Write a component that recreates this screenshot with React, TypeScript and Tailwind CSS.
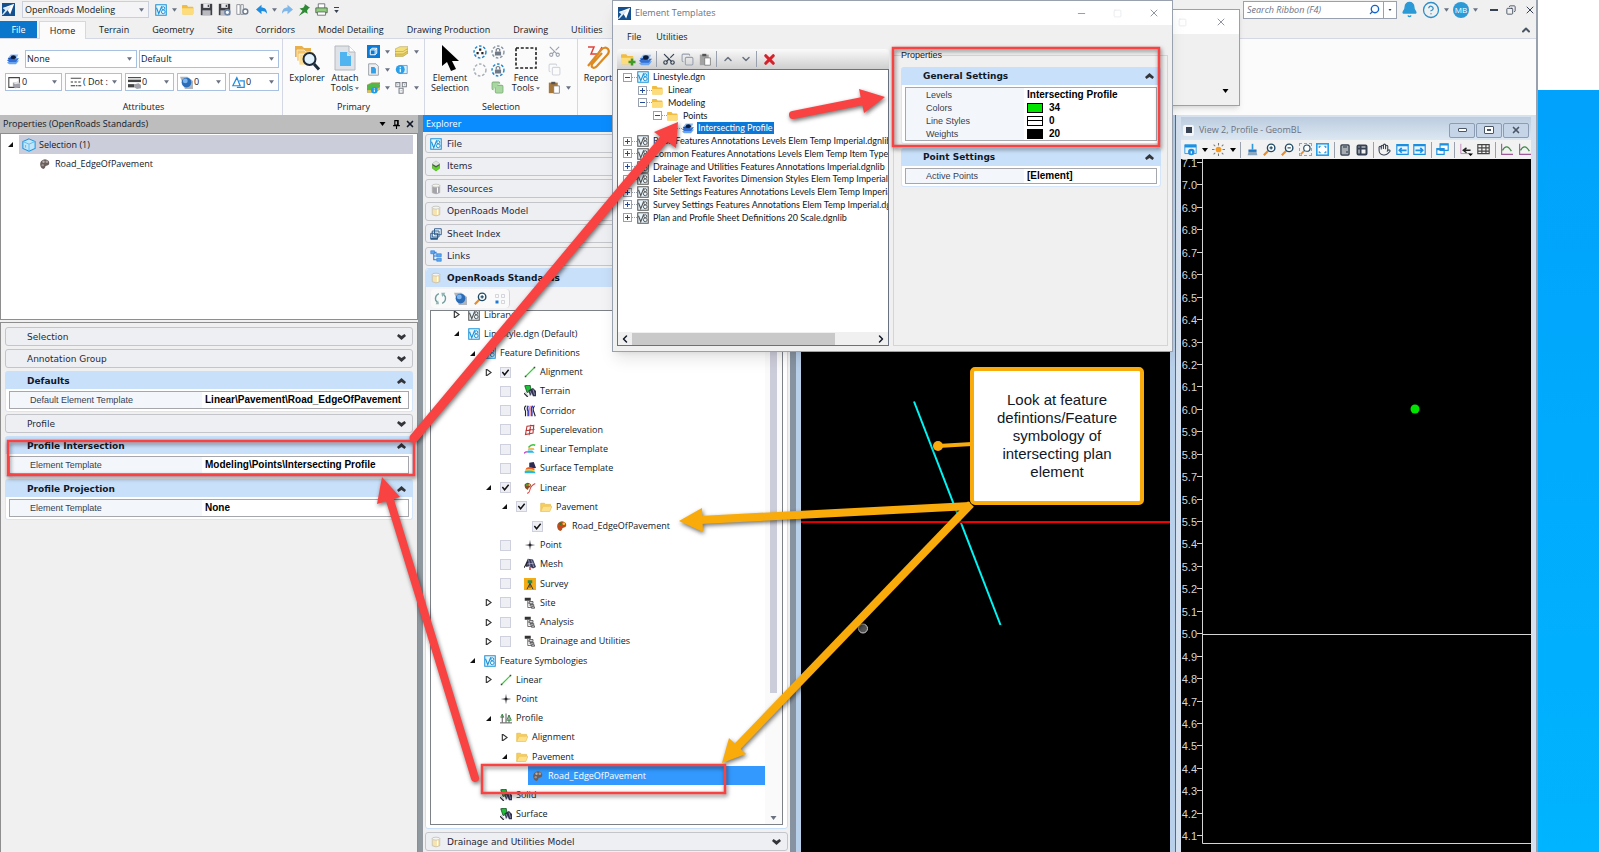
import type { ReactNode } from 'react'
import {
  Bell,
  Calculator,
  ChevronDown,
  ChevronLeft,
  ChevronRight,
  ChevronUp,
  CircleHelp,
  Copy,
  Hand,
  Minus,
  Scissors,
  Search,
  Square,
  Table2,
  X,
} from 'lucide-react'
import { clsx } from 'clsx'

type IconProps = { className?: string }

function Svg({ className = 'h-3 w-3', children }: IconProps & { children: ReactNode }) {
  return (
    <svg viewBox="0 0 16 16" className={clsx('shrink-0', className)} fill="none" aria-hidden="true">
      {children}
    </svg>
  )
}

/* ---------- icons ---------- */

function Caret({ className = 'h-1 w-[5px] text-gray-500' }: IconProps) {
  return (
    <svg viewBox="0 0 6 4" className={clsx('pointer-events-none shrink-0', className)} aria-hidden="true">
      <path d="M0 0h6L3 4z" fill="currentColor" />
    </svg>
  )
}

function LogoIcon({ className }: IconProps) {
  return (
    <Svg className={className}>
      <path d="M0 0h16v16H0z" fill="#14508f" />
      <path d="M1 6 15 1 10 14 7 9z" fill="#fff" />
      <path d="m1 6 10-2-4 5-6 6-1-1 4-5z" fill="#dcebfa" />
      <path d="m7 9 4-5-7 9z" fill="#14508f" />
    </Svg>
  )
}

function V8Icon({ className, color = '#1b93d8' }: IconProps & { color?: string }) {
  return (
    <Svg className={className}>
      <path d="M1 1h14v14H1z" fill="#e9f5fd" stroke={color} strokeWidth="1.4" />
      <path d="m2 5 3 8 4-10" stroke={color} strokeWidth="1.5" />
      <circle cx="11" cy="5.6" r="2" stroke={color} strokeWidth="1.3" />
      <circle cx="11" cy="10.4" r="2.5" stroke={color} strokeWidth="1.3" />
    </Svg>
  )
}

function FolderIcon({ className }: IconProps) {
  return (
    <Svg className={className}>
      <path d="M0 3.500q0-1 1-1h5l1.500 2H13q1 0 1 1V13q0 1-1 1H1q-1 0-1-1z" fill="#f0bd42" />
      <path d="M0 6.500h14V13q0 1-1 1H1q-1 0-1-1z" fill="#fddc7c" />
    </Svg>
  )
}

function OpenFolderIcon({ className }: IconProps) {
  return (
    <Svg className={className}>
      <path d="M1 14V3h5l1.500 1.500H14V7" fill="#f6cf5e" stroke="#e6bb4c" />
      <path d="m1 14 3-7h12l-3 7z" fill="#ffe08a" stroke="#ecc45a" />
    </Svg>
  )
}

function SaveIcon({ className, gear }: IconProps & { gear?: boolean }) {
  return (
    <Svg className={className}>
      <path d="M1 1h14v14H1z" fill="#3f3f46" />
      <path d="M4 1h8v5H4z" fill="#e8e8ec" />
      <path d="M9.500 2h1.500v3H9.500z" fill="#3f3f46" />
      <path d="M3 9h10v6H3z" fill="#b9b9c0" />
      {gear && <circle cx="11.500" cy="11.500" r="3" fill="#fff" stroke="#6c87a8" strokeWidth="2" />}
    </Svg>
  )
}

function BookGearIcon({ className }: IconProps) {
  return (
    <Svg className={className}>
      <path d="M1 2h4v12H1zM6 2h3v12H6z" fill="#fff" stroke="#7f858c" />
      <circle cx="11.500" cy="10.500" r="3" fill="#fff" stroke="#6c7d92" strokeWidth="1.800" />
    </Svg>
  )
}

function UndoIcon({ className, color = '#1e8de0' }: IconProps & { color?: string }) {
  return (
    <Svg className={className}>
      <path d="M0 8 8 1v4c5 0 8 3 8 9-2-3-4-4-8-4v5z" fill={color} />
    </Svg>
  )
}

function PushpinIcon({ className }: IconProps) {
  return (
    <Svg className={className}>
      <path d="m9 0 7 5-2 1-2 3 1 4-4-2-8 5 5-7-4-3 5-1 2-3z" fill="#2f8a36" />
    </Svg>
  )
}

function PrintIcon({ className }: IconProps) {
  return (
    <Svg className={className}>
      <path d="M4 1h8v6H4z" fill="#fff" stroke="#5c6066" />
      <path d="M1 6h14v6H1z" fill="#8fce7c" stroke="#4f5a50" />
      <path d="M3 11h10v4H3z" fill="#fff" stroke="#5c6066" />
    </Svg>
  )
}

function LevelIcon({ className }: IconProps) {
  return (
    <Svg className={className}>
      <path d="m0 13 4-3h12l-4 5H3z" fill="#6aa3ee" />
      <path d="m0 9.500 4-2.500h12l-4 5H3z" fill="#2f6fd6" />
      <path d="m1 7 4-5h10l-3 7H3z" fill="#8dbdf7" />
      <path d="m1 7 4-1 6 2 1 1H3z" fill="#1a4fb0" />
      <ellipse cx="8.500" cy="5.500" rx="3.500" ry="2.600" fill="#0b1b3a" />
    </Svg>
  )
}

function ColorIcon({ className }: IconProps) {
  return (
    <Svg className={className}>
      <path d="M1 2h13v12H1z" stroke="#444" strokeWidth="1.300" />
      <path d="m6 8 6-1 3 2v5l-6 1-3-2z" fill="#a1a1aa" />
      <path d="m6 8 6-1 3 2-6 1z" fill="#e4e4e7" />
    </Svg>
  )
}

function LineStyleIcon({ className }: IconProps) {
  return (
    <Svg className={className}>
      <path d="M1 3h14" stroke="#333" strokeWidth="1.200" />
      <path d="M1 8h14" stroke="#333" strokeWidth="1.400" strokeDasharray="3 2" />
      <path d="M1 13h14" stroke="#333" strokeWidth="1.400" strokeDasharray="6 1 2 1" />
    </Svg>
  )
}

function WeightIcon({ className }: IconProps) {
  return (
    <Svg className={className}>
      <path d="M0 2h16" stroke="#444" strokeWidth="1.400" />
      <path d="M0 6h16" stroke="#444" strokeWidth="3" />
      <path d="M0 12h8" stroke="#444" strokeWidth="4" />
      <path d="m8 10 5-1 3 2v4l-5 1-3-2z" fill="#a1a1aa" />
    </Svg>
  )
}

function SphereIcon({ className }: IconProps) {
  return (
    <Svg className={className}>
      <path d="M0 1h9l7 5v10H6z" fill="#b0b4bb" />
      <circle cx="8" cy="8" r="6" fill="#2a6cb8" />
      <circle cx="6.500" cy="6" r="3" fill="#7db4ee" />
    </Svg>
  )
}

function PriorityIcon({ className }: IconProps) {
  return (
    <Svg className={className}>
      <path d="M6 2 1 12h9zM9 6h6v8H6" stroke="#1e8de0" strokeWidth="1.500" />
    </Svg>
  )
}

function ExplorerIcon() {
  return (
    <svg viewBox="0 0 26 26" className="h-[26px] w-[26px] shrink-0" fill="none" aria-hidden="true">
      <path d="M1 1h7l2 2h7v9H1z" fill="#e9b04a" />
      <path d="M3 5h7l2 2h8v9H3z" fill="#f3c568" stroke="#fff" strokeWidth=".6" />
      <path d="M5 9h7l2 2h8v9H5z" fill="#fbdc94" stroke="#fff" strokeWidth=".6" />
      <circle cx="15.500" cy="14" r="6" fill="#e3f3fd" stroke="#1d2b3a" strokeWidth="2" />
      <path d="m20 19 5 5.500" stroke="#1d2b3a" strokeWidth="3" />
    </svg>
  )
}

function AttachIcon() {
  return (
    <svg viewBox="0 0 22 26" className="h-[26px] w-[22px] shrink-0" fill="none" aria-hidden="true">
      <path d="M1 1h14l6 6v18H1z" fill="#dfe2e6" stroke="#b4b9c0" />
      <path d="M15 1v6h6" fill="#fff" stroke="#b4b9c0" />
      <path d="M6 7h7l4 4v10H6z" fill="#4fb4f0" />
      <path d="M13 7v4h4z" fill="#c4e6fb" />
    </svg>
  )
}

function CubeIcon({ className }: IconProps) {
  return (
    <Svg className={className}>
      <path d="M0 0h16v16H0z" fill="#0a7ad6" />
      <path d="M4 6h6v6H4zM4 6l2-2h6l-2 2M12 4v6l-2 2" stroke="#fff" strokeWidth="1.200" />
    </Svg>
  )
}

function PageIcon({ className }: IconProps) {
  return (
    <Svg className={className}>
      <path d="M2 1h9l3 3v11H2z" fill="#eef0f2" stroke="#8d949c" />
      <path d="M5 5h4l2 2v6H5z" fill="#31a0e8" />
    </Svg>
  )
}

function StackIcon({ className, top = '#f3df7c', badge }: IconProps & { top?: string; badge?: boolean }) {
  return (
    <Svg className={className}>
      <path d="m0 11 6-3h10v2l-6 4H0z" fill="#e2c95c" stroke="#a8923a" strokeWidth=".6" />
      <path d="m0 8 6-3h10v2l-6 4H0z" fill={top} stroke="#a8923a" strokeWidth=".6" />
      <path d="m0 5 6-3h10v2l-6 4H0z" fill={top} stroke="#a8923a" strokeWidth=".6" />
      {badge && <circle cx="9" cy="11.500" r="4" fill="#1e9be6" />}
      {badge && <path d="M9 10.500v3M9 9v.8" stroke="#fff" strokeWidth="1.200" />}
    </Svg>
  )
}

function InfoTagIcon({ className }: IconProps) {
  return (
    <Svg className={className}>
      <path d="M6 3h9v10H6z" fill="#dff0fc" stroke="#3aa0e6" />
      <circle cx="6.500" cy="8" r="5.500" fill="#2b9fe8" />
      <path d="M6.500 7v4.500M6.500 4.500V6" stroke="#fff" strokeWidth="1.500" />
    </Svg>
  )
}

function BlocksIcon({ className }: IconProps) {
  return (
    <Svg className={className}>
      <path d="M1 2h5v5H1zM9 2h5v5H9zM5 9h5v6H5zM3 4.500h1M11 4.500h1M7 12h1" stroke="#7c828a" strokeWidth="1.300" />
    </Svg>
  )
}

function CursorIcon() {
  return (
    <svg viewBox="0 0 18 26" className="h-[26px] w-[18px] shrink-0" aria-hidden="true">
      <path d="M1 0v21l5-4 4 9 5-2-4-8h7z" fill="#000" />
    </svg>
  )
}

function RingIcon({ color = '#2288d0', dots, lock }: { color?: string; dots?: boolean; lock?: boolean }) {
  return (
    <Svg className="h-[14px] w-[14px]">
      <circle cx="8" cy="8" r="6.800" stroke={color} strokeWidth="1.700" strokeDasharray="3 2" />
      {dots && <path d="M7 4h2.500v2.500H7zM4 8h2.500v2.500H4zM9.500 8H12v2.500H9.500z" fill="#222" />}
      {lock && <path d="M4.500 7.500h7V12h-7z" fill="#6f7a86" />}
      {lock && <path d="M6 7.500V5q2-2 4 0v2.500" stroke="#6f7a86" strokeWidth="1.300" />}
    </Svg>
  )
}

function FenceIcon() {
  return (
    <svg viewBox="0 0 22 22" className="h-[22px] w-[22px] shrink-0" fill="none" aria-hidden="true">
      <path d="M1 1h20v20H1z" stroke="#222" strokeWidth="1.600" strokeDasharray="3 1.800" />
    </svg>
  )
}

function PasteIcon({ className, board = '#a5773a' }: IconProps & { board?: string }) {
  return (
    <Svg className={className}>
      <path d="M1 2h11v13H1z" fill={board} />
      <path d="M4 1h5v3H4z" fill="#555" />
      <path d="M7 6h7v9H7z" fill="#fff" stroke="#777" />
    </Svg>
  )
}

function ReportIcon() {
  return (
    <svg viewBox="0 0 26 26" className="h-[26px] w-[26px] shrink-0" fill="none" aria-hidden="true">
      <path d="M3 2h6l-3 7h7l4-7" stroke="#e0433a" strokeWidth="1.500" />
      <path d="M3 21 16 5q4-4 7-1 2 3-1 6L12 21q-3 3-5 1-1-2 1-4l9-10" stroke="#dd8a20" strokeWidth="2.200" />
    </svg>
  )
}

function GemIcon({ className }: IconProps) {
  return (
    <Svg className={className}>
      <path d="m8 1 5 4v6l-5 4-5-4V5z" fill="#4d5a4d" />
      <path d="m8 1 5 4-5 3-5-3z" fill="#dfe5df" />
      <path d="m3 7 5 3 5-3v4l-5 4-5-4z" fill="#5fd225" />
    </Svg>
  )
}

function DrumIcon({ className, fill = '#a3a3ab' }: IconProps & { fill?: string }) {
  return (
    <Svg className={className}>
      <path d="M3 3v10q5 3 10 0V3z" fill={fill} stroke="#b4b2a6" strokeWidth=".8" />
      <ellipse cx="8" cy="3.500" rx="5" ry="2" fill="#f4f4f5" stroke="#b4b2a6" strokeWidth=".8" />
      <path d="M10 6v7" stroke="#fff" strokeWidth="1.500" />
    </Svg>
  )
}

function SheetsIcon({ className }: IconProps) {
  return (
    <Svg className={className}>
      <path d="M1 7h9v8H1zM3 4h9v8H3zM6 1h9v8H6z" fill="#f1f7fd" stroke="#2f5d8a" strokeWidth="1.300" />
      <path d="M1 13h9v2H1z" fill="#2f5d8a" />
    </Svg>
  )
}

function LinksIcon({ className }: IconProps) {
  return (
    <Svg className={className}>
      <path d="M3 3h5v3M5 4v9h4M5 8h4" stroke="#2a78d8" strokeWidth="1.400" />
      <path d="M1 1h5v4H1zM9 5h6v4H9zM9 11h6v4H9z" fill="#5ba8ef" stroke="#2a78d8" strokeWidth=".8" />
    </Svg>
  )
}

function SelectionCubeIcon({ className }: IconProps) {
  return (
    <Svg className={className}>
      <path d="m8 1 7 3v8l-7 3-7-3V4z" fill="#bfe6fb" stroke="#1f95de" strokeWidth="1.200" />
      <path d="m1 4 7 3 7-3M8 7v8" stroke="#5cb7ec" />
      <path d="M4 8v3" stroke="#e8a23a" strokeWidth="1.300" />
    </Svg>
  )
}

function PaletteIcon({ className, gray }: IconProps & { gray?: boolean }) {
  return (
    <Svg className={className}>
      <path d="M3 4q5-5 10 0 2 5-2 6-3 0-3 3-2 3-5 0-3-5 0-9z" fill={gray ? '#6b5f5c' : '#b5501c'} />
      <circle cx="6" cy="5" r="1.600" fill={gray ? '#b8b0ad' : '#2f7a2a'} />
      <circle cx="10.500" cy="5" r="1.800" fill={gray ? '#a8a09d' : '#f7c531'} />
      <circle cx="5" cy="9.500" r="1.600" fill={gray ? '#9c9491' : '#e8322a'} />
    </Svg>
  )
}

function AlignmentIcon({ className }: IconProps) {
  return (
    <Svg className={className}>
      <path d="M2 14 14 2" stroke="#38c838" strokeWidth="1.500" />
      <path d="M1 13h2v2H1zM13 1h2v2h-2z" fill="#444" />
    </Svg>
  )
}

function TerrainIcon({ className }: IconProps) {
  return (
    <Svg className={className}>
      <path d="m1 1 7-1 2 8-6 2z" fill="#1fbf3a" stroke="#14401c" />
      <path d="m6 7 6-3 4 4v7h-4l-2-4-2 4z" fill="#33334d" />
      <path d="m1 9 5 6M8 8l3 6M12 6l2 7" stroke="#a9b0d8" />
      <path d="m0 11 5 5" stroke="#222" strokeWidth="1.500" />
    </Svg>
  )
}

function CorridorIcon({ className }: IconProps) {
  return (
    <Svg className={className}>
      <path d="M3 1Q-1 3 2 8v7M14 1q-3 4-1 8l2 6" stroke="#222" strokeWidth="1.500" />
      <path d="M5.500 1q-2 4 0 7v7M11.500 1q-3 4-1 8v6" stroke="#2a32c8" strokeWidth="2" />
      <path d="M8.500 1q-2 4-.500 7v7" stroke="#f08a8a" strokeWidth="2" />
    </Svg>
  )
}

function SuperIcon({ className }: IconProps) {
  return (
    <Svg className={className}>
      <path d="m4 3 9-1-1 10-10 2zM9 1 7 15M2 9l12-2" stroke="#b83a3a" strokeWidth="1.500" />
    </Svg>
  )
}

function LinearTemplateIcon({ className }: IconProps) {
  return (
    <Svg className={className}>
      <path d="M6 6q4-5 9-3" stroke="#39c23a" strokeWidth="2" />
      <path d="M6 7h7l1 2H5z" fill="#f2a12a" />
      <path d="M5 10h6l3 3H5z" fill="#28b6e8" />
      <path d="M0 14q2-3 5-2" stroke="#c23ac8" strokeWidth="1.800" />
    </Svg>
  )
}

function SurfaceTemplateIcon({ className }: IconProps) {
  return (
    <Svg className={className}>
      <path d="m7 1 6-1 3 8-9 1z" fill="#2b2b52" />
      <path d="M3 8q5-3 11 1v2H2z" fill="#f0622a" />
      <path d="M2 10q6-2 12 1v2H1z" fill="#f4d22a" />
      <path d="M1 12q6-2 14 1v2H1z" fill="#28b6e8" />
    </Svg>
  )
}

function LinearIcon({ className }: IconProps) {
  return (
    <Svg className={className}>
      <path d="M1 3q4-4 8 0 1 4-3 5 0 3-2 2-4-2-3-7z" fill="#8a4a22" />
      <circle cx="4" cy="4" r="1.500" fill="#38b038" />
      <circle cx="7" cy="4" r="1.200" fill="#f4c22a" />
      <path d="M4 15q3 0 4-5t7-8" stroke="#e04848" strokeWidth="1.400" />
    </Svg>
  )
}

function PointIcon({ className }: IconProps) {
  return (
    <Svg className={className}>
      <path d="m8 1 1.500 5.500L15 8 9.500 9.500 8 15 6.500 9.500 1 8l5.500-1.500z" fill="#8a8a90" />
      <circle cx="8" cy="8" r="1.800" fill="#2a2a2e" />
    </Svg>
  )
}

function MeshIcon({ className }: IconProps) {
  return (
    <Svg className={className}>
      <path d="m5 1 7 1 4 10-4 2-5-3-4 1-1-4z" fill="#3a3a5a" />
      <path d="m6 2 2 9M10 3l3 9M4 8l9-1" stroke="#b9bedd" strokeWidth=".9" />
      <path d="m0 13 5-8" stroke="#222" strokeWidth="1.500" />
      <path d="M8 12v4" stroke="#e03030" strokeWidth="2" />
    </Svg>
  )
}

function SurveyIcon({ className }: IconProps) {
  return (
    <Svg className={className}>
      <path d="M0 0h16v16H0z" fill="#f5ac14" />
      <path d="M8 7 4 15M8 7l4 8M8 7v6" stroke="#333" strokeWidth="1.300" />
      <path d="M5 3h6v4H5z" fill="#2e8a4a" />
    </Svg>
  )
}

function SiteIcon({ className }: IconProps) {
  return (
    <Svg className={className}>
      <path d="M1 1h8v4H1z" fill="#333" />
      <path d="M5 5v9h5M5 8h4" stroke="#666" strokeWidth="1.200" />
      <path d="M7 6h5v3H7zM8 10h5v2H8zM10 13h4v2h-4z" fill="#d8d8dc" stroke="#444" />
    </Svg>
  )
}

function ProfileIcon({ className }: IconProps) {
  return (
    <Svg className={className}>
      <path d="M0 14.500h16M3 3v11M8 2v12M12 4v10" stroke="#444" strokeWidth="1.200" />
      <path d="m1 7 2-4 2 4zM9 11l3-7 3 7z" stroke="#2c8a3a" strokeWidth="1.200" />
    </Svg>
  )
}

function RefreshIcon({ className }: IconProps) {
  return (
    <Svg className={className}>
      <path d="M6 2Q1 4 2 10l3 4M10 14q5-2 4-8l-3-4" stroke="#6f9c9c" strokeWidth="1.700" />
      <path d="m5 10 1 5H2zM10 6 9 1h5z" fill="#8fb5b5" />
    </Svg>
  )
}

function ZoomIcon({ className, sign }: IconProps & { sign?: string }) {
  return (
    <Svg className={className}>
      <path d="M7 9 1 15" stroke="#e8892a" strokeWidth="2.600" />
      <circle cx="10" cy="6" r="4.600" fill="#fff" stroke="#1f4a66" strokeWidth="1.700" />
      {sign && <path d={sign} stroke="#1f4a66" strokeWidth="1.500" />}
    </Svg>
  )
}

/* ---------- ribbon ---------- */

const tabs = ['Terrain', 'Geometry', 'Site', 'Corridors', 'Model Detailing', 'Drawing Production', 'Drawing', 'Utilities']

function Combo({ label, value, icon, className }: { label: string; value: string; icon?: ReactNode; className?: string }) {
  return (
    <label className={clsx('flex h-[18px] items-center border border-[#a9c1e0] bg-white pr-1', className)}>
      {icon}
      <select aria-label={label} className="h-full min-w-0 flex-1 appearance-none bg-transparent pl-px outline-none">
        <option>{value}</option>
      </select>
      <Caret />
    </label>
  )
}

function TitleBar() {
  return (
    <header className="flex h-[21px] items-center bg-[#f0f0f0] pb-[2px] pl-[2px]">
      <LogoIcon className="h-[13px] w-[13px]" />
      <label className="ml-[7px] flex h-[17px] w-[127px] items-center border border-[#c9cfdc] bg-[#f4f4f6] pr-1">
        <select aria-label="Workflow" className="min-w-0 flex-1 appearance-none bg-transparent pl-[2px] outline-none">
          <option>OpenRoads Modeling</option>
        </select>
        <Caret />
      </label>
      <div className="ml-[6px] flex items-center gap-[5px]">
        <V8Icon className="h-3 w-3" />
        <Caret />
        <FolderIcon className="h-[13px] w-[13px]" />
        <SaveIcon className="h-[13px] w-[13px]" />
        <SaveIcon className="h-[13px] w-[13px]" gear />
        <BookGearIcon className="h-[13px] w-[13px]" />
        <UndoIcon className="ml-[2px] h-[11px] w-[11px]" />
        <Caret />
        <span className="-scale-x-100">
          <UndoIcon className="h-[11px] w-[11px]" color="#7fb8e8" />
        </span>
        <PushpinIcon className="h-3 w-3" />
        <PrintIcon className="h-[13px] w-[13px]" />
        <span className="ml-px flex flex-col gap-[2px]">
          <i className="h-px w-[5px] bg-gray-700" />
          <Caret className="h-[3px] w-[5px] text-gray-700" />
        </span>
      </div>
      <div className="ml-auto flex items-center">
        <label className="flex h-[18px] w-[154px] items-center border border-gray-400 bg-white">
          <input
            aria-label="Search Ribbon"
            placeholder="Search Ribbon (F4)"
            className="min-w-0 flex-1 bg-transparent pl-[3px] italic outline-none placeholder:text-gray-500"
          />
          <Search className="h-[11px] w-[11px] -scale-x-100 text-[#1464c8]" strokeWidth={3} />
          <span className="ml-[3px] flex h-full w-[13px] items-center justify-center border-l border-gray-400">
            <Caret className="h-[2px] w-1 text-gray-700" />
          </span>
        </label>
        <Bell className="ml-1 h-[17px] w-[17px] fill-[#2b9ad6] text-[#2b9ad6]" />
        <CircleHelp className="ml-1 h-[18px] w-[18px] text-[#2b8ec8]" strokeWidth={1.700} />
        <Caret className="ml-1 h-1 w-[5px] text-gray-500" />
        <span className="ml-1 flex h-4 w-4 items-center justify-center rounded-full bg-[#2b9ad6] text-[8px] text-white">MB</span>
        <Caret className="ml-1 h-1 w-[5px] text-gray-500" />
        <button aria-label="Minimize" className="ml-3 flex h-3 w-3 items-center">
          <i className="h-[2px] w-2 bg-gray-700" />
        </button>
        <button aria-label="Restore" className="ml-1">
          <Copy className="h-[10px] w-[10px] -scale-x-100 text-gray-700" />
        </button>
        <button aria-label="Close" className="ml-2">
          <X className="h-3 w-3 text-gray-700" />
        </button>
      </div>
    </header>
  )
}

function TabRow() {
  return (
    <nav className="flex h-[18px] items-stretch border-b border-[#d3d8e4] bg-[#f0f0f0] pr-1">
      <button className="w-[37px] bg-[#0a76cc] text-white">File</button>
      <button className="ml-[2px] -mb-px w-[47px] border border-b-0 border-[#d3d8e4] bg-[#fbfbfb]">Home</button>
      <div className="ml-[13px] flex gap-[23px]">
        {tabs.map((tab) => (
          <button key={tab} className="whitespace-nowrap">
            {tab}
          </button>
        ))}
      </div>
      <button aria-label="Collapse ribbon" className="ml-auto">
        <ChevronUp className="h-3 w-3 text-gray-600" strokeWidth={4} />
      </button>
    </nav>
  )
}

function Group({ title, className, children }: { title: string; className: string; children: ReactNode }) {
  return (
    <section className={clsx('flex shrink-0 flex-col border-r border-[#d3d8e4]', className)}>
      <div className="flex flex-1 items-start">{children}</div>
      <h2 className="h-[14px] text-center leading-[12px]">{title}</h2>
    </section>
  )
}

function BigButton({ icon, lines, caret, className }: { icon: ReactNode; lines: string[]; caret?: boolean; className: string }) {
  return (
    <button className={clsx('mt-[6px] flex shrink-0 flex-col items-center leading-[10px]', className)}>
      <span className="flex h-[26px] items-center">{icon}</span>
      {lines.map((line, i) => (
        <span key={line} className={clsx('flex items-center gap-[2px]', i === 0 && 'mt-[2px]')}>
          {line}
          {caret && i === lines.length - 1 && <Caret className="h-[3px] w-1 text-gray-500" />}
        </span>
      ))}
    </button>
  )
}

function Ribbon() {
  return (
    <div className="flex h-[76px] overflow-hidden bg-[#fbfbfb]">
      <Group title="Attributes" className="w-[283px] pl-[5px]">
        <div className="flex flex-col gap-[5px] pt-[11px]">
          <div className="flex items-center">
            <LevelIcon className="mx-[2px] h-3 w-3" />
            <Combo label="Element template" value="None" className="ml-1 w-[112px]" />
            <Combo label="Level" value="Default" className="ml-[2px] w-[140px]" />
          </div>
          <div className="flex gap-[3px]">
            <Combo label="Color" value="0" icon={<ColorIcon className="ml-[2px] h-[13px] w-[13px]" />} className="w-[57px]" />
            <Combo label="Line style" value="( Dot :" icon={<LineStyleIcon className="ml-1 h-3 w-3" />} className="w-[57px]" />
            <Combo label="Weight" value="0" icon={<WeightIcon className="ml-[2px] h-[13px] w-[13px]" />} className="w-[49px]" />
            <Combo label="Transparency" value="0" icon={<SphereIcon className="ml-[2px] h-[13px] w-[13px]" />} className="w-[49px]" />
            <Combo label="Priority" value="0" icon={<PriorityIcon className="ml-[2px] h-[13px] w-[13px]" />} className="w-[50px]" />
          </div>
        </div>
      </Group>

      <Group title="Primary" className="w-[142px]">
        <BigButton icon={<ExplorerIcon />} lines={['Explorer']} className="ml-1 w-10" />
        <BigButton icon={<AttachIcon />} lines={['Attach', 'Tools']} caret className="w-9" />
        <div className="ml-1 grid grid-cols-[18px_10px_19px_6px] items-center gap-y-[5px] pt-[6px]">
          <CubeIcon className="h-[13px] w-[13px]" />
          <Caret />
          <StackIcon className="h-[13px] w-[13px]" />
          <Caret />
          <PageIcon className="h-[13px] w-[13px]" />
          <Caret />
          <InfoTagIcon className="h-[13px] w-[13px]" />
          <span />
          <StackIcon className="h-[13px] w-[13px]" top="#4fb848" badge />
          <Caret />
          <BlocksIcon className="h-[13px] w-[13px]" />
          <Caret />
        </div>
      </Group>

      <Group title="Selection" className="w-[153px]">
        <BigButton icon={<CursorIcon />} lines={['Element', 'Selection']} className="ml-1 w-[42px]" />
        <div className="ml-[2px] grid grid-cols-2 gap-x-1 gap-y-1 pt-[6px]">
          <RingIcon dots />
          <RingIcon color="#8a98a8" lock />
          <RingIcon color="#a8b0ba" />
          <RingIcon lock />
          <span />
          <Copy className="h-[13px] w-[13px] fill-[#a8d8a0] text-[#8ab884]" />
        </div>
        <BigButton icon={<FenceIcon />} lines={['Fence', 'Tools']} caret className="ml-1 w-[34px]" />
        <div className="ml-[5px] flex flex-col gap-[5px] pt-[6px]">
          <Scissors className="h-[13px] w-[13px] -rotate-90 text-gray-400" />
          <Copy className="h-[13px] w-[13px] text-gray-300" />
          <span className="flex items-center gap-[5px]">
            <PasteIcon className="h-[13px] w-[13px]" />
            <Caret />
          </span>
        </div>
      </Group>

      <BigButton icon={<ReportIcon />} lines={['Report']} className="w-10" />
    </div>
  )
}

/* ---------- shared panels ---------- */

function Chevron({ up }: { up?: boolean }) {
  return (
    <svg viewBox="0 0 9 6" className="ml-auto h-[6px] w-[9px] shrink-0" aria-hidden="true">
      <path d={up ? 'M4.500 0 9 4 7.500 6l-3-2-3 2L0 4z' : 'M4.500 6 9 2 7.500 0l-3 2-3-2L0 2z'} fill="#33353a" />
    </svg>
  )
}

function ClosedBar({ title, icon, pad = 'pl-[21px]' }: { title: string; icon?: ReactNode; pad?: string }) {
  return (
    <button
      className={clsx(
        "flex h-[19px] w-full shrink-0 items-center rounded-[3px] border border-[#c3c5cb] bg-[#eeeff3] pr-[6px] font-[family-name:'DejaVu_Sans',sans-serif] text-gray-800",
        pad,
      )}
    >
      {icon}
      {title}
      <Chevron />
    </button>
  )
}

function OpenBar({ title, icon, pad = 'pl-[22px]' }: { title: string; icon?: ReactNode; pad?: string }) {
  return (
    <button
      className={clsx(
        "flex h-[18px] w-full shrink-0 items-center rounded-t-[3px] bg-[#c9e0fa] pr-[7px] font-[family-name:'DejaVu_Sans',sans-serif] font-bold",
        pad,
      )}
    >
      {icon}
      {title}
      <Chevron up />
    </button>
  )
}

type Field = { label: string; value: string; swatch?: ReactNode }

function FieldBox({ fields, cols, rowHeight }: { fields: Field[]; cols: string; rowHeight: string }) {
  return (
    <div className="rounded-b-[3px] border border-t-0 border-[#d5e6fa] bg-white px-[3px] py-[2px]">
      <div className="border border-[#a5a7ad]">
        {fields.map((f) => (
          <label
            key={f.label}
            className={clsx("grid items-center font-[family-name:'Liberation_Sans',sans-serif]", cols, rowHeight)}
          >
            <span className="flex h-full items-center bg-[#f3f7fc] pl-5 text-gray-700">{f.label}</span>
            <span className="flex min-w-0 items-center gap-[6px] pl-[3px]">
              {f.swatch}
              <input
                readOnly
                value={f.value}
                className="h-3 min-w-0 flex-1 bg-transparent text-[10px] font-bold text-black outline-none"
              />
            </span>
          </label>
        ))}
      </div>
    </div>
  )
}

function PropSection({ title, label, value }: { title: string; label: string; value: string }) {
  return (
    <section className="h-10 shrink-0">
      <OpenBar title={title} pad="pt-[2px] pl-[22px]" />
      <FieldBox fields={[{ label, value }]} cols="grid-cols-[192px_1fr]" rowHeight="h-4" />
    </section>
  )
}

function PropertiesPanel() {
  return (
    <aside className="flex w-[418px] shrink-0 flex-col bg-[#f0f0f0]">
      <div className="flex h-[18px] shrink-0 items-center bg-[#bdbdbd] pr-[3px] pl-[3px]">
        <h2>Properties (OpenRoads Standards)</h2>
        <Caret className="mr-[6px] ml-auto h-1 w-[7px] text-black" />
        <Svg className="h-[9px] w-[9px]">
          <path d="M5 1h6v8H5zM2 10h12M8 10v6M10 1v8" stroke="#000" strokeWidth="2" />
        </Svg>
        <X className="ml-1 h-[10px] w-[10px]" strokeWidth={4} />
      </div>
      <ul className="h-[187px] shrink-0 border border-[#8e8e8e] bg-white pt-px pr-1 pl-px">
        <li className="flex h-[19px] items-center">
          <TreeCaret open />
          <span className="ml-px flex h-full flex-1 items-center gap-[3px] bg-[#cccdda] pl-[3px]">
            <SelectionCubeIcon className="h-[14px] w-[14px]" />
            Selection (1)
          </span>
        </li>
        <li className="flex h-[19px] items-center gap-1 pl-[37px]">
          <PaletteIcon className="h-3 w-3" gray />
          Road_EdgeOfPavement
        </li>
      </ul>
      <div className="mt-[2px] flex min-h-0 flex-1 flex-col gap-[3px] border-x border-t border-[#8e8e8e] px-1 pt-1">
        <ClosedBar title="Selection" />
        <ClosedBar title="Annotation Group" />
        <PropSection title="Defaults" label="Default Element Template" value="Linear\Pavement\Road_EdgeOfPavement" />
        <ClosedBar title="Profile" />
        <PropSection title="Profile Intersection" label="Element Template" value="Modeling\Points\Intersecting Profile" />
        <PropSection title="Profile Projection" label="Element Template" value="None" />
      </div>
    </aside>
  )
}

/* ---------- explorer ---------- */

function TreeCaret({ open }: { open?: boolean }) {
  return (
    <span className="flex w-4 shrink-0 justify-center">
      {open !== undefined && (
        <svg viewBox="0 0 8 8" className={clsx('shrink-0', open ? 'h-[5px] w-[5px]' : 'h-[7px] w-[7px]')} aria-hidden="true">
          {open ? (
            <path d="M8 0v8H0z" fill="#111" />
          ) : (
            <path d="M1.500 0 7 4 1.500 8z" fill="#fff" stroke="#333" strokeWidth="1.300" />
          )}
        </svg>
      )}
    </span>
  )
}

type Node = {
  text: string
  level: number
  icon: ReactNode
  open?: boolean
  check?: boolean
  selected?: boolean
}

const indents = ['pl-4', 'pl-8', 'pl-12', 'pl-16', 'pl-20']

const nodes: Node[] = [
  { text: 'Library', level: 0, icon: <V8Icon color="#555" />, open: false },
  { text: 'Linestyle.dgn (Default)', level: 0, icon: <V8Icon />, open: true },
  { text: 'Feature Definitions', level: 1, icon: <V8Icon />, open: true },
  { text: 'Alignment', level: 2, icon: <AlignmentIcon />, open: false, check: true },
  { text: 'Terrain', level: 2, icon: <TerrainIcon />, check: false },
  { text: 'Corridor', level: 2, icon: <CorridorIcon />, check: false },
  { text: 'Superelevation', level: 2, icon: <SuperIcon />, check: false },
  { text: 'Linear Template', level: 2, icon: <LinearTemplateIcon />, check: false },
  { text: 'Surface Template', level: 2, icon: <SurfaceTemplateIcon />, check: false },
  { text: 'Linear', level: 2, icon: <LinearIcon />, open: true, check: true },
  { text: 'Pavement', level: 3, icon: <OpenFolderIcon />, open: true, check: true },
  { text: 'Road_EdgeOfPavement', level: 4, icon: <PaletteIcon />, check: true },
  { text: 'Point', level: 2, icon: <PointIcon />, check: false },
  { text: 'Mesh', level: 2, icon: <MeshIcon />, check: false },
  { text: 'Survey', level: 2, icon: <SurveyIcon />, check: false },
  { text: 'Site', level: 2, icon: <SiteIcon />, open: false, check: false },
  { text: 'Analysis', level: 2, icon: <SiteIcon />, open: false, check: false },
  { text: 'Drainage and Utilities', level: 2, icon: <SiteIcon />, open: false, check: false },
  { text: 'Feature Symbologies', level: 1, icon: <V8Icon />, open: true },
  { text: 'Linear', level: 2, icon: <AlignmentIcon />, open: false },
  { text: 'Point', level: 2, icon: <PointIcon /> },
  { text: 'Profile', level: 2, icon: <ProfileIcon />, open: true },
  { text: 'Alignment', level: 3, icon: <OpenFolderIcon />, open: false },
  { text: 'Pavement', level: 3, icon: <OpenFolderIcon />, open: true },
  { text: 'Road_EdgeOfPavement', level: 4, icon: <PaletteIcon gray />, selected: true },
  { text: 'Solid', level: 2, icon: <TerrainIcon /> },
  { text: 'Surface', level: 2, icon: <TerrainIcon /> },
]

function TreeRow({ node }: { node: Node }) {
  return (
    <li className={clsx('flex min-h-0 flex-1 items-center', indents[node.level])}>
      <TreeCaret open={node.open} />
      <label
        className={clsx('flex h-full flex-1 items-center gap-1 pl-1', node.selected && 'bg-[#3399ff] text-white')}
      >
        {node.check !== undefined && (
          <span className="mr-[9px] grid h-[11px] w-[11px] place-items-center">
            <input
              type="checkbox"
              defaultChecked={node.check}
              className="peer col-start-1 row-start-1 h-[11px] w-[11px] appearance-none border border-[#cfd0dd] bg-[#eeeef5]"
            />
            <svg
              viewBox="0 0 10 10"
              className="pointer-events-none invisible col-start-1 row-start-1 h-[9px] w-[9px] peer-checked:visible"
              fill="none"
              aria-hidden="true"
            >
              <path d="m1.500 4.500 2.500 3L8.500 2" stroke="#111" strokeWidth="1.600" />
            </svg>
          </span>
        )}
        {node.icon}
        {node.text}
      </label>
    </li>
  )
}

const bars: { title: string; icon: ReactNode }[] = [
  { title: 'File', icon: <V8Icon /> },
  { title: 'Items', icon: <GemIcon /> },
  { title: 'Resources', icon: <DrumIcon /> },
  { title: 'OpenRoads Model', icon: <DrumIcon fill="#f6e3ae" /> },
  { title: 'Sheet Index', icon: <SheetsIcon /> },
  { title: 'Links', icon: <LinksIcon /> },
]

function BarIcon({ children }: { children: ReactNode }) {
  return <span className="mr-[5px] flex w-3">{children}</span>
}

function ExplorerPanel() {
  return (
    <aside className="flex w-[367px] shrink-0 flex-col bg-[#f0f0f0]">
      <h2 className="flex h-[17px] shrink-0 items-center bg-[#0a8cff] pl-[3px] text-white">Explorer</h2>
      <div className="flex min-h-0 flex-1 flex-col px-[2px] pt-[2px]">
        <div className="flex h-[132px] shrink-0 flex-col justify-between">
          {bars.map((bar) => (
            <ClosedBar key={bar.title} title={bar.title} icon={<BarIcon>{bar.icon}</BarIcon>} pad="pl-1" />
          ))}
        </div>
        <div className="mt-[2px] flex min-h-0 flex-1 flex-col rounded-[3px] border border-[#c9e0fa] bg-white">
          <OpenBar
            title="OpenRoads Standards"
            icon={
              <BarIcon>
                <DrumIcon fill="#f6e3ae" />
              </BarIcon>
            }
            pad="pl-1"
          />
          <div className="flex h-[23px] shrink-0 items-center bg-[#f3f3f5] pl-[5px]">
            <div className="flex h-[19px] items-center gap-[7px] rounded-sm border-r border-gray-300 bg-[#fafafa] px-[3px]">
              <RefreshIcon className="h-[13px] w-[13px]" />
              <SphereIcon className="h-[13px] w-[13px]" />
              <ZoomIcon className="h-[13px] w-[13px]" sign="M8 6h4M10 4v4" />
              <Svg className="h-3 w-3">
                <path d="M2 2h4v4H2zM10 2h4v4h-4zM10 10h4v4h-4z" stroke="#c8cad2" />
                <path d="M2 10h4v4H2z" fill="#1e78d8" />
              </Svg>
            </div>
          </div>
          <div className="mr-1 mb-[3px] ml-1 flex min-h-0 flex-1 border border-[#7d8188]">
            <div className="flex min-w-0 flex-1 flex-col justify-end overflow-hidden">
              <ul className="flex h-[519px] shrink-0 flex-col pl-px">
                {nodes.map((node, i) => (
                  <TreeRow key={i} node={node} />
                ))}
              </ul>
            </div>
            <div className="flex w-[17px] flex-col items-center justify-between bg-[#fafafa] pb-1">
              <i className="h-[75%] w-[7px] bg-[#cccdda]" />
              <Caret className="h-1 w-[7px] text-gray-500" />
            </div>
          </div>
        </div>
        <div className="py-[3px] pb-px">
          <ClosedBar
            title="Drainage and Utilities Model"
            icon={
              <BarIcon>
                <DrumIcon fill="#f6e3ae" />
              </BarIcon>
            }
            pad="pl-1"
          />
        </div>
      </div>
    </aside>
  )
}

/* ---------- views ---------- */

function PlanView() {
  return (
    <section className="flex min-w-0 flex-1 flex-col border-x-[5px] border-[#b9d0ea] pt-[44px]">
      <svg className="min-h-0 w-full flex-1 bg-black" aria-label="Plan view">
        <path d="M113 242.500 199.500 466" stroke="#00f5f5" strokeWidth="2" />
        <path d="M0 363h1600" stroke="#f50000" strokeWidth="2" />
        <circle cx="62" cy="469.500" r="4.500" fill="#555" stroke="#ccc" />
      </svg>
    </section>
  )
}

const ticks = Array.from({ length: 31 }, (_, i) => ({ label: (7.1 - i * 0.1).toFixed(1), y: 4 + i * 22.44 }))

function Sep() {
  return <i className="h-4 w-px bg-gray-400" />
}

function ViewButton({ label, children }: { label: string; children: ReactNode }) {
  return (
    <button aria-label={label} className="flex h-[15px] w-[26px] items-center justify-center rounded-[2px] border border-[#8b9cb3] bg-[#c5d4e6]">
      {children}
    </button>
  )
}

function ChartIcon({ d, className }: IconProps & { d: string }) {
  return (
    <Svg className={className}>
      <path d="M2 1v13h14" stroke="#a05a9a" strokeWidth="1.400" />
      <path d={d} stroke="#3d8a44" strokeWidth="1.600" />
    </Svg>
  )
}

function PanIcon({ d }: { d: string }) {
  return (
    <Svg className="h-[13px] w-[13px]">
      <path d="M1 2h14v12H1z" fill="#eaf6ff" stroke="#1b8fe0" strokeWidth="1.400" />
      <path d="M1 3h14" stroke="#1b8fe0" strokeWidth="2" />
      <path d={d} stroke="#1b8fe0" strokeWidth="2" />
    </Svg>
  )
}

function ProfileView() {
  return (
    <section className="flex w-[361px] shrink-0 flex-col border-l border-[#2a7f98] bg-[#d5e1ef] px-[5px] pt-[2px]">
      <div className="flex h-[23px] shrink-0 items-center gap-[5px] bg-linear-to-b from-[#bccddf] to-[#dce7f2] pt-[3px] pr-[2px] pl-[2px]">
        <span className="flex h-[11px] w-[11px] items-center justify-center rounded-[2px] bg-gray-100">
          <i className="h-[6px] w-[6px] bg-gray-700" />
        </span>
        <h2 className="flex-1 text-gray-500">View 2, Profile - GeomBL</h2>
        <ViewButton label="Minimize view">
          <i className="h-1 w-[9px] rounded-[1px] border border-gray-600 bg-white" />
        </ViewButton>
        <div className="-mx-1">
          <ViewButton label="Maximize view">
            <i className="flex h-2 w-[10px] items-center justify-center rounded-[1px] border border-gray-600 bg-white">
              <i className="h-[2px] w-1 bg-gray-600" />
            </i>
          </ViewButton>
        </div>
        <ViewButton label="Close view">
          <X className="h-[10px] w-[10px] text-gray-600" strokeWidth={4} />
        </ViewButton>
      </div>
      <div className="flex h-[19px] shrink-0 items-center justify-between overflow-hidden bg-[#f2f2f2] pl-[3px]">
        <Svg className="h-[13px] w-[13px]">
          <path d="M1 2h14v11H1z" fill="#e6f4fe" stroke="#1b8fe0" />
          <path d="M1 4h14" stroke="#1b8fe0" strokeWidth="3" />
          <circle cx="9" cy="11" r="4" fill="#1e8fe0" />
          <path d="M9 10v3" stroke="#fff" strokeWidth="1.500" />
        </Svg>
        <Caret className="h-1 w-[6px] text-black" />
        <Svg className="h-[13px] w-[13px]">
          <circle cx="8" cy="8" r="3.500" fill="#f29a2a" />
          <path d="M8 0v3M8 13v3M0 8h3M13 8h3M2 2l2 2M12 12l2 2M14 2l-2 2M2 14l2-2" stroke="#777" strokeWidth="1.300" />
        </Svg>
        <Caret className="h-1 w-[6px] text-black" />
        <Sep />
        <Svg className="h-[13px] w-[13px]">
          <path d="M7 1h2v7H7z" fill="#2b9ae0" />
          <path d="M3 8h10v3H3z" fill="#2478c0" />
          <path d="M3 11h10l1 4H2z" fill="#8ba8c0" />
        </Svg>
        <ZoomIcon className="h-[13px] w-[13px]" sign="M8 6h4M10 4v4" />
        <ZoomIcon className="h-[13px] w-[13px]" sign="M8 6h4" />
        <span className="border border-dashed border-gray-400">
          <ZoomIcon className="h-[11px] w-[11px]" />
        </span>
        <Svg className="h-[13px] w-[13px]">
          <path d="M0 0h16v16H0z" fill="#2b9fe8" />
          <path d="M2 2h12v12H2z" fill="#fff" />
          <path d="M4 6V4h2M10 4h2v2M12 10v2h-2M6 12H4v-2" stroke="#2b9fe8" strokeWidth="1.500" />
        </Svg>
        <Sep />
        <Calculator className="h-3 w-3 text-gray-700" strokeWidth={3} />
        <Table2 className="h-3 w-3 text-gray-700" strokeWidth={4} />
        <Sep />
        <Hand className="h-[13px] w-[13px] -scale-x-100 text-gray-700" />
        <PanIcon d="M13 9H4M7 6 4 9l3 3" />
        <PanIcon d="M3 9h9M9 6l3 3-3 3" />
        <Sep />
        <Svg className="h-[13px] w-[13px]">
          <path d="M5 1h10v8H5zM1 7h9v7H1z" fill="#fff" stroke="#1b8fe0" strokeWidth="1.400" />
          <path d="M5 2h10M1 8h9" stroke="#1b8fe0" strokeWidth="2" />
        </Svg>
        <Sep />
        <Svg className="h-[13px] w-[13px]">
          <path d="M1 1v12h12" stroke="#c48ac0" strokeWidth="1.200" />
          <path d="M4 9h9M8 6 4 9l4 3" stroke="#222" strokeWidth="1.800" />
          <path d="M10 13h6l-3 3z" fill="#000" />
        </Svg>
        <Svg className="h-[13px] w-[13px]">
          <path d="M1 2h14v11H1zM1 6h14M1 10h14M6 2v11M11 2v11" stroke="#444" strokeWidth="1.400" />
        </Svg>
        <Sep />
        <ChartIcon className="h-[13px] w-[13px]" d="M3 9q5-9 11 1" />
        <ChartIcon className="h-[13px] w-[13px]" d="M3 9q5-9 11 1" />
      </div>
      <svg className="min-h-0 w-full flex-1 bg-black font-[family-name:'Liberation_Sans',sans-serif] text-[11px]" aria-label="Profile view">
        <path d="M21.500 0v684.500H360M21.500 475.500H360" stroke="#d4d4d4" fill="none" />
        {ticks.map((t) => (
          <g key={t.label}>
            <path d={`M16 ${Math.round(t.y) - 0.5}h6`} stroke="#d4d4d4" />
            <text x="16" y={t.y + 4} textAnchor="end" fill="#d4d4d4">
              {t.label}
            </text>
          </g>
        ))}
        <circle cx="234" cy="250" r="4.500" fill="#00e400" />
      </svg>
    </section>
  )
}

/* ---------- dialogs ---------- */

type Template = { text: string; level: number; box?: '+' | '-'; icon: ReactNode; selected?: boolean }

const templateIndents = ['pl-[5px]', 'pl-5', 'pl-[35px]', 'pl-[50px]']

const lib = (text: string): Template => ({ text, level: 0, box: '+', icon: <V8Icon color="#555" /> })

const templates: Template[] = [
  { text: 'Linestyle.dgn', level: 0, box: '-', icon: <V8Icon /> },
  { text: 'Linear', level: 1, box: '+', icon: <FolderIcon /> },
  { text: 'Modeling', level: 1, box: '-', icon: <FolderIcon /> },
  { text: 'Points', level: 2, box: '-', icon: <FolderIcon /> },
  { text: 'Intersecting Profile', level: 3, icon: <LevelIcon />, selected: true },
  lib('Road Features Annotations Levels Elem Temp Imperial.dgnlib'),
  lib('Common Features Annotations Levels Elem Temp Item Types I'),
  lib('Drainage and Utilities Features Annotations Imperial.dgnlib'),
  lib('Labeler Text Favorites Dimension Styles Elem Temp Imperial.dg'),
  lib('Site Settings Features Annotations Levels Elem Temp Imperial.'),
  lib('Survey Settings Features Annotations Elem Temp Imperial.dgnl'),
  lib('Plan and Profile Sheet Definitions 20 Scale.dgnlib'),
]

const generalFields: Field[] = [
  { label: 'Levels', value: 'Intersecting Profile' },
  { label: 'Colors', value: '34', swatch: <i className="h-[10px] w-4 border border-black bg-[#00e400]" /> },
  {
    label: 'Line Styles',
    value: '0',
    swatch: (
      <i className="flex h-[10px] w-4 items-center border border-black bg-white">
        <i className="h-px w-full bg-black" />
      </i>
    ),
  },
  { label: 'Weights', value: '20', swatch: <i className="h-[10px] w-4 border border-black bg-black" /> },
]

function BackWindow() {
  return (
    <div className="absolute top-[9px] left-[1100px] h-[97px] w-[140px] border border-gray-400 bg-[#f0f0f0] shadow-md">
      <div className="flex h-6 items-center justify-end gap-7 bg-white pr-3">
        <Square className="h-[9px] w-[9px] text-gray-200" />
        <X className="h-3 w-3 text-gray-500" strokeWidth={1.500} />
      </div>
      <Caret className="mt-[55px] mr-[10px] ml-auto h-1 w-[7px] text-black" />
    </div>
  )
}

function TemplatesDialog() {
  return (
    <div className="absolute top-0 left-[612px] flex h-[352px] w-[561px] flex-col border border-gray-400 bg-[#f0f0f0] shadow-lg">
      <div className="flex h-6 shrink-0 items-center bg-white pr-3 pl-[5px]">
        <LogoIcon className="h-[13px] w-[13px]" />
        <h2 className="ml-1 text-gray-500">Element Templates</h2>
        <button aria-label="Minimize dialog" className="ml-auto">
          <Minus className="h-[11px] w-[11px] text-gray-500" strokeWidth={1.500} />
        </button>
        <Square className="ml-[26px] h-[9px] w-[9px] text-gray-200" />
        <button aria-label="Close dialog" className="ml-[26px]">
          <X className="h-3 w-3 text-gray-500" strokeWidth={1.500} />
        </button>
      </div>
      <div className="flex min-h-0 flex-1 pr-1 pb-[5px] pl-1">
        <div className="flex w-[272px] shrink-0 flex-col">
          <div className="flex h-6 shrink-0 items-center gap-[15px] pl-[10px]">
            <button>File</button>
            <button>Utilities</button>
          </div>
          <div className="flex h-5 shrink-0 items-center gap-1 rounded-t-sm bg-linear-to-b from-[#fafafa] to-[#cfcfcf] pl-1 text-gray-500">
            <span className="relative">
              <FolderIcon className="h-[14px] w-[14px]" />
              <Svg className="absolute -right-px bottom-0 h-2 w-2">
                <path d="M8 1v14M1 8h14" stroke="#3f9a2a" strokeWidth="5" />
              </Svg>
            </span>
            <LevelIcon className="h-[13px] w-[13px]" />
            <Sep />
            <Scissors className="ml-px h-[14px] w-[14px] -rotate-90 text-gray-700" />
            <Copy className="ml-px h-[13px] w-[13px] text-gray-400" />
            <PasteIcon className="ml-px h-[13px] w-[13px]" board="#a3a3a3" />
            <Sep />
            <ChevronUp className="ml-px h-3 w-3" strokeWidth={3} />
            <ChevronDown className="ml-[2px] h-3 w-3" strokeWidth={3} />
            <Sep />
            <X className="ml-px h-[15px] w-[15px] text-[#d8202a]" strokeWidth={5} />
          </div>
          <div className="flex min-h-0 flex-1 flex-col justify-between border border-gray-500 bg-white">
            <ul className="flex h-[154px] flex-col overflow-hidden pt-px font-[family-name:Lato,'Liberation_Sans',sans-serif]">
              {templates.map((t) => (
                <li key={t.text} className={clsx('flex min-h-0 flex-1 items-center whitespace-nowrap', templateIndents[t.level])}>
                  {t.box ? (
                    <span className="flex h-[9px] w-[9px] shrink-0 items-center justify-center border border-gray-400 bg-white">
                      <svg viewBox="0 0 7 7" className="h-[7px] w-[7px]" aria-hidden="true">
                        <path d={t.box === '+' ? 'M1 3.500h5M3.500 1v5' : 'M1 3.500h5'} stroke="#234a9a" />
                      </svg>
                    </span>
                  ) : (
                    <i className="w-[9px]" />
                  )}
                  <i className="w-[5px] shrink-0 border-t border-dotted border-gray-400" />
                  {t.icon}
                  <span className={clsx('ml-[3px] px-px leading-[12px]', t.selected && 'bg-[#0a78d7] text-white')}>{t.text}</span>
                </li>
              ))}
            </ul>
            <div className="flex h-[13px] items-center bg-[#f0f0f0]">
              <ChevronLeft className="mx-px h-3 w-3" strokeWidth={3} />
              <i className="h-3 w-[203px] bg-[#c9c9c9]" />
              <ChevronRight className="mr-px ml-auto h-3 w-3" strokeWidth={3} />
            </div>
          </div>
        </div>
        <fieldset className="mt-[23px] ml-1 min-w-0 flex-1 border border-gray-300 pr-[6px] pl-[7px]">
          <legend className="px-0 font-[family-name:'Liberation_Sans',sans-serif] leading-[14px]">Properties</legend>
          <div className="mt-[5px]">
            <OpenBar title="General Settings" />
            <FieldBox fields={generalFields} cols="grid-cols-[118px_1fr]" rowHeight="h-[13px]" />
          </div>
          <div className="mt-1">
            <OpenBar title="Point Settings" />
            <FieldBox fields={[{ label: 'Active Points', value: '[Element]' }]} cols="grid-cols-[118px_1fr]" rowHeight="h-[14px]" />
          </div>
        </fieldset>
      </div>
    </div>
  )
}

/* ---------- markup drawn over the windows ---------- */

function Markup() {
  return (
    <>
      <svg className="pointer-events-none absolute inset-0 h-full w-full drop-shadow-[1px_2px_2px_rgba(0,0,0,0.55)]" fill="none" aria-hidden="true">
        <g stroke="#f94343" strokeWidth="2.500">
          <path d="M8 441h406v34H8z" />
          <path d="M482 765h243v28H482z" />
          <path d="M893 48h266v98H893z" />
        </g>
        <g stroke="#f94343" strokeLinecap="round">
          <path d="m414 438 250-299" strokeWidth="9" />
          <path d="m793 115 70-14" strokeWidth="8" />
          <path d="m475 778-86-281" strokeWidth="8" />
        </g>
        <g fill="#f94343">
          <path d="m678 122-24 10 22 16z" />
          <path d="m885 97-26-8 5 24z" />
          <path d="m382 477-5 27 23-7z" />
        </g>
        <g stroke="#f9ab0b">
          <path d="m970 506-270 14" strokeWidth="8" />
          <path d="M971 504 735 749" strokeWidth="8" />
          <path d="m938 446 34-2" strokeWidth="4" />
        </g>
        <g fill="#f9ab0b">
          <circle cx="938" cy="446" r="5" />
          <path d="m679 521 23-13 1 24z" />
          <path d="m722 763 7-25 17 16z" />
        </g>
      </svg>
      <p className="absolute top-[367px] left-[970px] flex h-[138px] w-[174px] items-center justify-center rounded-[5px] border-4 border-[#f9ab0b] bg-white px-5 text-center font-[family-name:'Liberation_Sans',sans-serif] text-[15px] leading-[18px] text-gray-900">
        Look at feature defintions/Feature symbology of intersecting plan element
      </p>
    </>
  )
}

export default function App() {
  return (
    <div className="relative flex h-screen overflow-hidden bg-white font-[family-name:'Open_Sans','Noto_Sans',sans-serif] text-[9px] leading-[12px] text-gray-900">
      <main className="flex min-w-0 flex-1 flex-col border-r-2 border-gray-400">
        <TitleBar />
        <TabRow />
        <Ribbon />
        <div className="flex min-h-0 flex-1">
          <PropertiesPanel />
          <i className="w-[5px] shrink-0 bg-[#8f989f]" />
          <ExplorerPanel />
          <i className="w-[6px] shrink-0 bg-[#8793a0]" />
          <PlanView />
          <ProfileView />
        </div>
      </main>
      <div className="w-[61px] shrink-0 pt-[90px]">
        <div className="h-full bg-linear-to-b from-[#00a2fb] to-[#00b4ff]" />
      </div>
      <BackWindow />
      <TemplatesDialog />
      <Markup />
    </div>
  )
}
